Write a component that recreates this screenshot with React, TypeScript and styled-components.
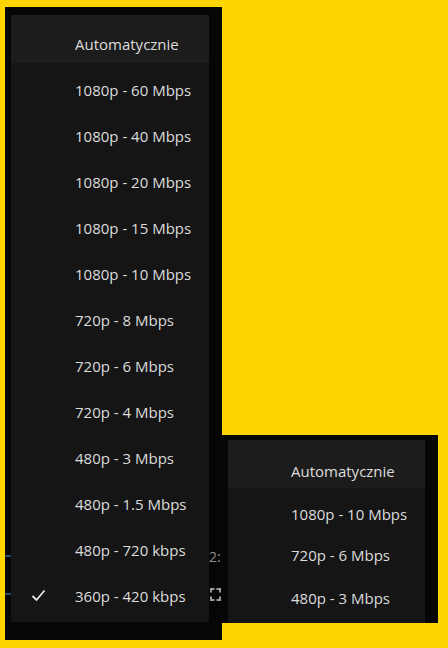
import React from 'react'
import styled, { createGlobalStyle } from 'styled-components'

const GlobalStyle = createGlobalStyle`
  html, body {
    margin: 0;
    padding: 0;
    background: #ffd500;
  }
  body {
    font-family: 'Open Sans', 'Noto Sans', sans-serif;
  }
`

const Page = styled.div`
  width: 448px;
  height: 648px;
  background: #ffd500;
  display: flex;
  align-items: flex-start;
  padding: 7px 0 0 5px;
  box-sizing: border-box;
  overflow: hidden;
`

const Frame = styled.div<{ $w: number; $h: number; $top: number; $left: number }>`
  position: relative;
  width: ${(p) => p.$w}px;
  height: ${(p) => p.$h}px;
  margin-top: ${(p) => p.$top}px;
  padding: ${(p) => (p.$top === 0 ? 8 : 5)}px 0 0 ${(p) => p.$left}px;
  box-sizing: border-box;
  background: #060606;
  flex-shrink: 0;
  overflow: hidden;
`

const Menu = styled.div<{ $w: number; $h: number }>`
  position: relative;
  z-index: 2;
  width: ${(p) => p.$w}px;
  height: ${(p) => p.$h}px;
  background: #151515;
  display: flex;
  flex-direction: column;
`

const Header = styled.div<{ $h: number; $pad: number }>`
  height: ${(p) => p.$h}px;
  box-sizing: border-box;
  padding-top: ${(p) => p.$pad}px;
  background: #1c1c1c;
  display: flex;
  align-items: flex-start;
`

const Items = styled.div<{ $pad: number }>`
  display: flex;
  flex-direction: column;
  padding-top: ${(p) => p.$pad}px;
`

const Row = styled.div<{ $h: number }>`
  height: ${(p) => p.$h}px;
  display: flex;
  align-items: center;
  position: relative;
`

const Label = styled.span<{ $indent: number }>`
  padding-left: ${(p) => p.$indent}px;
  color: #dcdcdc;
  font-size: 15px;
  font-weight: 500;
  line-height: 20px;
  white-space: nowrap;
`

const Check = styled.svg`
  position: absolute;
  left: 20px;
  top: 50%;
  margin-top: -7px;
  width: 15px;
  height: 13px;
`

const Controls = styled.div`
  position: absolute;
  left: 0;
  right: 0;
  top: 539px;
  height: 58px;
  z-index: 1;
  display: flex;
  flex-direction: column;
  justify-content: space-between;
`

const ControlRow = styled.div`
  position: relative;
  height: 20px;
  display: flex;
  align-items: center;
  padding-left: 204px;
`

const Progress = styled.div`
  position: absolute;
  left: 0;
  top: 9px;
  width: 6px;
  height: 2px;
  background: #2f4a63;
`

const Time = styled.span`
  color: #8f8f8f;
  font-size: 14px;
  font-weight: 500;
  white-space: nowrap;
`

const FullScreen = styled.svg`
  width: 11px;
  height: 13px;
  margin-left: 1px;
`

const leftItems = [
  '1080p - 60 Mbps',
  '1080p - 40 Mbps',
  '1080p - 20 Mbps',
  '1080p - 15 Mbps',
  '1080p - 10 Mbps',
  '720p - 8 Mbps',
  '720p - 6 Mbps',
  '720p - 4 Mbps',
  '480p - 3 Mbps',
  '480p - 1.5 Mbps',
  '480p - 720 kbps',
  '360p - 420 kbps',
]

const rightItems = [
  { label: '1080p - 10 Mbps', h: 46 },
  { label: '720p - 6 Mbps', h: 35 },
  { label: '480p - 3 Mbps', h: 51 },
]

const CheckIcon = () => (
  <Check viewBox="0 0 15 13">
    <path d="M1.5 7 L5.5 11 L13.5 1.5" fill="none" stroke="#e6e6e6" strokeWidth="1.8" />
  </Check>
)

const App: React.FC = () => {
  return (
    <>
      <GlobalStyle />
      <Page>
        <Frame $w={217} $h={633} $top={0} $left={6}>
          <Controls>
            <ControlRow>
              <Progress />
              <Time>2:</Time>
            </ControlRow>
            <ControlRow>
              <Progress />
              <FullScreen viewBox="0 0 11 13">
                <path
                  d="M1 4.5V1h3.5M6.5 1H10v3.5M10 8.5V12H6.5M4.5 12H1V8.5"
                  fill="none"
                  stroke="#9a9a9a"
                  strokeWidth="2"
                />
              </FullScreen>
            </ControlRow>
          </Controls>
          <Menu $w={198} $h={607}>
            <Header $h={48} $pad={19}>
              <Label $indent={64}>Automatycznie</Label>
            </Header>
            <Items $pad={4}>
              {leftItems.map((item, i) => (
                <Row key={item} $h={46}>
                  {i === leftItems.length - 1 && <CheckIcon />}
                  <Label $indent={64}>{item}</Label>
                </Row>
              ))}
            </Items>
          </Menu>
        </Frame>
        <Frame $w={216} $h={188} $top={428} $left={6}>
          <Menu $w={197} $h={183}>
            <Header $h={52} $pad={21}>
              <Label $indent={63}>Automatycznie</Label>
            </Header>
            <Items $pad={3}>
              {rightItems.map((item) => (
                <Row key={item.label} $h={item.h}>
                  <Label $indent={63}>{item.label}</Label>
                </Row>
              ))}
            </Items>
          </Menu>
        </Frame>
      </Page>
    </>
  )
}

export default App
